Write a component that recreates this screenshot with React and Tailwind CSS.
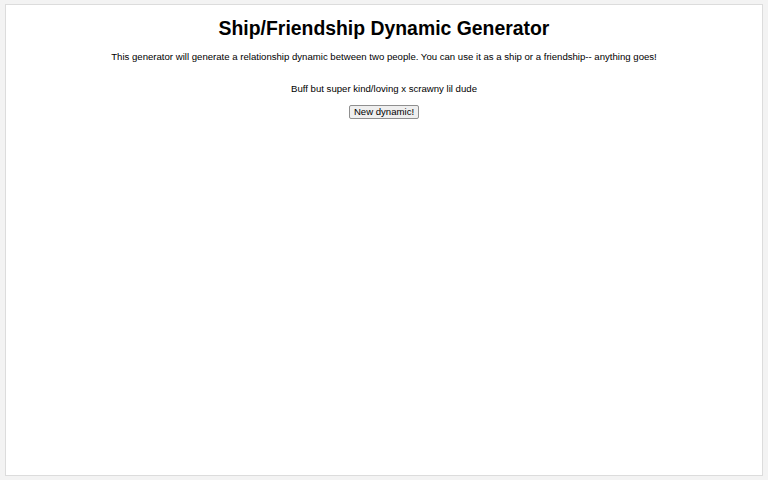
export default function App() {
  return (
    <div className="h-[480px] bg-[#f3f3f3] px-[5px] pt-[4px] pb-[4px] font-['Liberation_Sans',Arial,sans-serif] text-black">
      <div className="flex h-[472px] flex-col items-center border border-[#dcdcdc] bg-white">
        <h1 className="mt-[11px] text-[19.4px] font-bold leading-[24px]">Ship/Friendship Dynamic Generator</h1>
        <p className="mt-[11px] text-[9.6px] leading-[12px]">
          This generator will generate a relationship dynamic between two people. You can use it as a ship or a friendship-- anything goes!
        </p>
        <p className="mt-[20px] text-[9.6px] leading-[12px]">Buff but super kind/loving x scrawny lil dude</p>
        <button className="mt-[10px] rounded-[2px] border border-[#8f8f8f] bg-[#efefef] px-[4px] text-[9.6px] leading-[12px]">
          New dynamic!
        </button>
      </div>
    </div>
  );
}
